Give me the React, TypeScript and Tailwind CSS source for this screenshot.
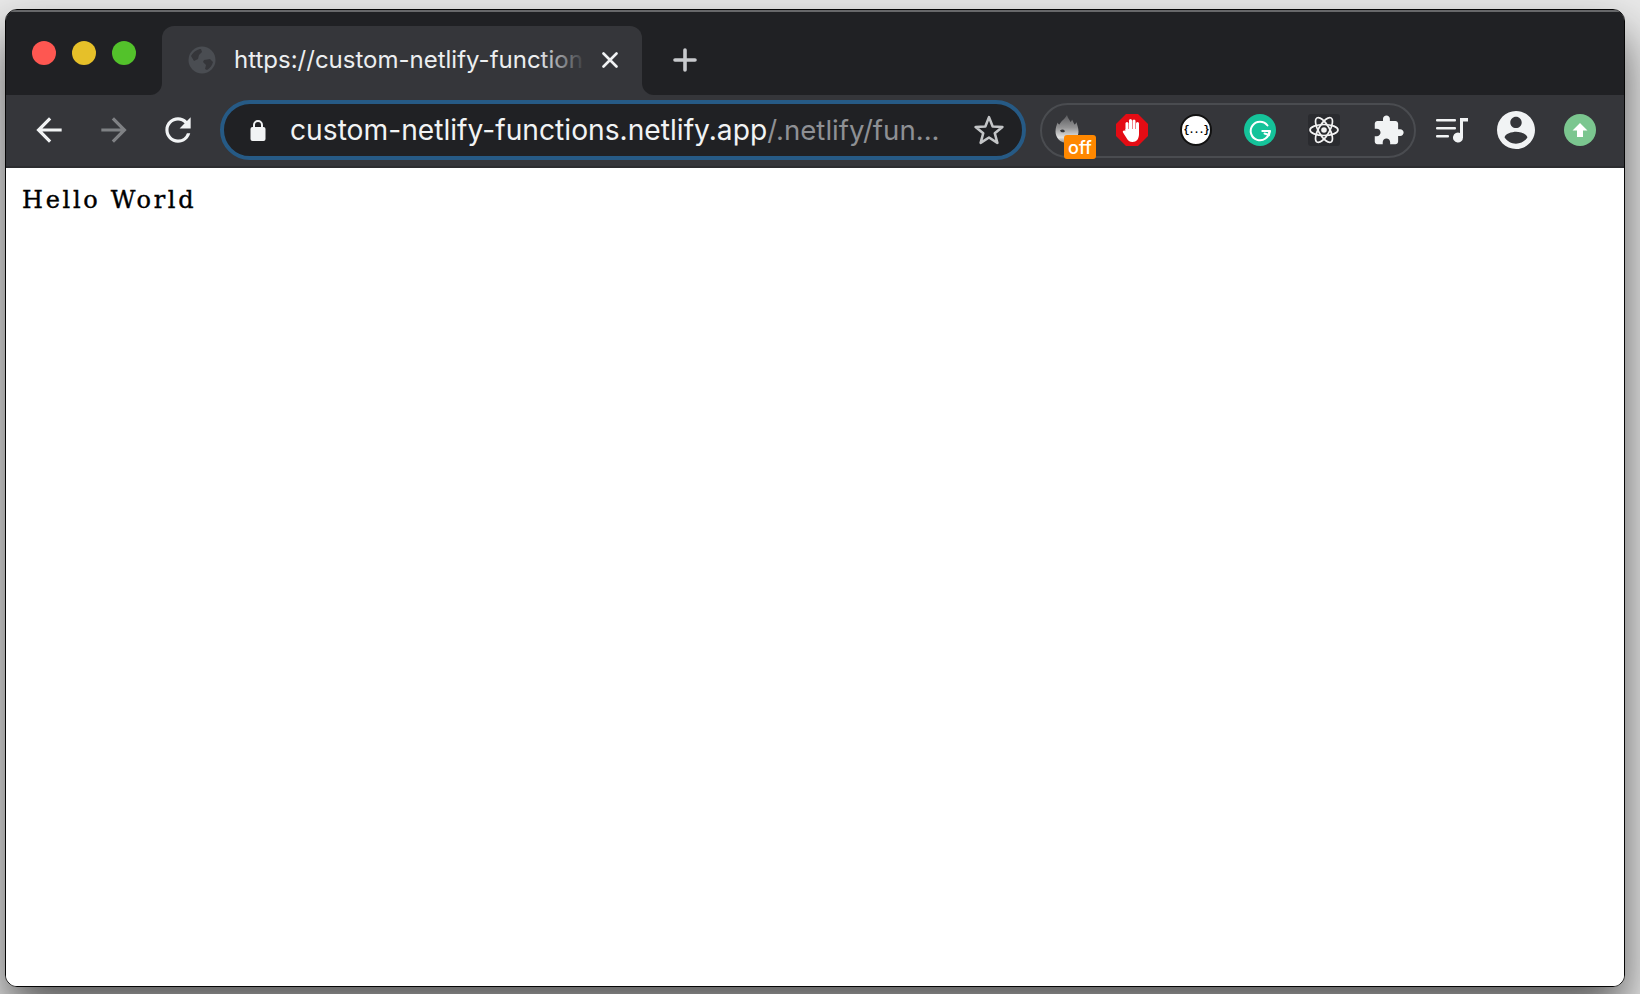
const Back = ({ className }: { className: string }) => (
  <svg viewBox="0 0 24 24" className={className} fill="currentColor">
    <path d="M20 11H7.83l5.59-5.59L12 4l-8 8 8 8 1.41-1.41L7.83 13H20z" />
  </svg>
);

const Flame = () => (
  <svg viewBox="0 0 24 28" className="w-[24px] h-[28px]">
    <defs>
      <linearGradient id="fl" x1="0" y1="0" x2="0" y2="1">
        <stop offset="0" stopColor="#5a5b5e" />
        <stop offset="0.45" stopColor="#949495" />
        <stop offset="0.8" stopColor="#e2e2e2" />
        <stop offset="1" stopColor="#8a8a8a" />
      </linearGradient>
    </defs>
    <path
      fill="url(#fl)"
      d="M12 0c.6 3 2.500 4.500 3.500 7 .8-.5 1.300-1.300 1.500-2.500 1 1.500 1.500 3.500 2.500 5 .8-.3 1.600-1.200 2-2.500.8 3.500 2 6 2 9.500 0 6-4.500 11.500-11.500 11.500S.5 22.500.5 16.500c0-3.500 1-6 2-9 .4 1 1.200 1.700 2 2C5.500 6.500 9.500 4.500 12 0z"
    />
    <path fill="#35363a" d="M5 15.500c2-1.500 4-1 5 .7-1.500 1.800-4 1.500-5-.7z" />
  </svg>
);

const StopHand = () => (
  <svg viewBox="0 0 32 32" className="w-8 h-8">
    <polygon fill="#e40c14" points="10,0 22,0 32,10 32,22 22,32 10,32 0,22 0,10" />
    <g fill="#fff">
      <rect x="9.500" y="8" width="3" height="13" rx="1.500" />
      <rect x="13" y="5" width="3" height="15" rx="1.500" />
      <rect x="16.500" y="5.500" width="3" height="15" rx="1.500" />
      <rect x="20" y="8" width="3" height="13" rx="1.500" />
      <path d="M9.500 15h13.500v5c0 5-2.500 8-6.500 8-3 0-4.500-1.500-6-4l-3.500-5.500c-.8-1.500 1-2.700 2.200-1.500l.3.300z" />
    </g>
  </svg>
);

const Grammarly = () => (
  <svg viewBox="0 0 32 32" className="w-8 h-8">
    <circle cx="16" cy="16" r="16" fill="#15c39a" />
    <path
      d="M23.500 11.500A9.300 9.300 0 1 0 25.300 17h-7"
      fill="none"
      stroke="#fff"
      strokeWidth="2"
      strokeLinecap="round"
      strokeLinejoin="round"
    />
    <path d="M20.500 19.500 25 21l1-4" fill="none" stroke="#fff" strokeWidth="2" strokeLinecap="round" />
  </svg>
);

const Atom = () => (
  <div className="w-8 h-8 rounded-[3px] bg-[#2a2b2f] flex items-center justify-center">
    <svg viewBox="0 0 32 32" className="w-8 h-8" fill="none" stroke="#f2f2f2" strokeWidth="1.700">
      <ellipse cx="16" cy="16" rx="14" ry="5.500" />
      <ellipse cx="16" cy="16" rx="14" ry="5.500" transform="rotate(60 16 16)" />
      <ellipse cx="16" cy="16" rx="14" ry="5.500" transform="rotate(120 16 16)" />
      <circle cx="16" cy="16" r="2.800" fill="#f2f2f2" stroke="none" />
    </svg>
  </div>
);

export default function App() {
  return (
    <div className="w-[1640px] h-[994px] overflow-hidden bg-[#e9e9e9] pt-[9px] pl-[5px]">
      <div className="w-[1620px] h-[978px] rounded-[12px] border border-[#050505] bg-white shadow-[0_26px_48px_rgba(0,0,0,0.62)] overflow-hidden flex flex-col">
        {/* Title bar */}
        <div className="h-[85px] shrink-0 flex bg-[#35363a] border-t-2 border-[#67686a]">
          <div className="w-[156px] shrink-0 bg-[#202124] rounded-br-[12px] flex items-center gap-[16px] pl-[26px] pb-[2px]">
            <span className="w-6 h-6 rounded-full bg-[#fe5751]" />
            <span className="w-6 h-6 rounded-full bg-[#e6c029]" />
            <span className="w-6 h-6 rounded-full bg-[#53c22b]" />
          </div>
          <div className="w-[480px] shrink-0 bg-[#202124] pt-[14px] flex">
            <div className="flex-1 min-w-0 bg-[#35363a] rounded-t-[12px] flex items-center pl-[26px] pr-[24px] pb-[1px]">
              <svg viewBox="0 0 28 28" className="w-[28px] h-[28px] shrink-0">
                <circle cx="14" cy="14" r="13.500" fill="#4a4d52" />
                <path
                  fill="#35363a"
                  d="M3 10c3-5 7-7 10-7l1 3-3 3-1 4-4 2-3-5zM16 14l6-1 3 3c-1 4-3 6-6 8l-2-1 1-4-3-3z"
                />
              </svg>
              <div className="relative ml-[18px] flex-1 min-w-0 whitespace-nowrap font-['Inter',sans-serif] text-[24px] leading-[32px] text-[#eceef0]">
                https://custom-netlify-function
                <span className="absolute right-0 inset-y-0 w-[48px] bg-gradient-to-r from-transparent to-[#35363a]" />
              </div>
              <svg viewBox="0 0 16 16" className="ml-[16px] w-4 h-4 shrink-0" stroke="#f1f3f4" strokeWidth="2.600" strokeLinecap="round">
                <path d="M1.500 1.500l13 13M14.500 1.500l-13 13" />
              </svg>
            </div>
          </div>
          <div className="flex-1 bg-[#202124] rounded-bl-[12px] pl-[31px] flex items-center pt-[12px]">
            <svg viewBox="0 0 24 24" className="w-6 h-6" stroke="#c8cacd" strokeWidth="3.600" strokeLinecap="round">
              <path d="M2 12h20M12 2v20" />
            </svg>
          </div>
        </div>

        {/* Toolbar */}
        <div className="h-[73px] shrink-0 bg-[#35363a] border-b-2 border-[#2c2d30] flex items-center pb-[1px]">
          <div className="w-[214px] shrink-0 flex items-center pl-[24px] gap-[26.5px]">
            <Back className="w-[38px] h-[38px] text-[#f1f3f4]" />
            <Back className="w-[38px] h-[38px] text-[#7f8184] rotate-180" />
            <svg viewBox="0 0 24 24" className="w-[38px] h-[38px] text-[#f1f3f4]" fill="currentColor">
              <path d="M17.650 6.350A7.960 7.960 0 0 0 12 4c-4.420 0-7.990 3.580-7.990 8s3.570 8 7.990 8c3.730 0 6.840-2.550 7.730-6h-2.080A5.990 5.990 0 0 1 12 18c-3.310 0-6-2.690-6-6s2.690-6 6-6c1.660 0 3.140.690 4.220 1.780L13 11h7V4l-2.350 2.350z" />
            </svg>
          </div>

          {/* Omnibox */}
          <div className="w-[806px] h-[60px] shrink-0 rounded-full border-[4px] border-[#265a85] bg-[#202124] flex items-center pl-[26px] pr-[18px]">
            <svg viewBox="0 0 16 22" className="w-[16px] h-[22px] shrink-0 mb-[1px]">
              <rect x="0.500" y="8" width="15" height="14" rx="2" fill="#f1f3f4" />
              <path d="M4 9V6a4 4 0 0 1 8 0v3" fill="none" stroke="#f1f3f4" strokeWidth="2" />
            </svg>
            <div className="ml-[24px] flex-1 whitespace-nowrap font-['Inter',sans-serif] text-[28.2px] leading-[36px] text-[#f1f3f4]">
              custom-netlify-functions.netlify.app
              <span className="text-[#8e9094] text-[27.6px]">/.netlify/fun...</span>
            </div>
            <svg viewBox="0 0 28 28" className="w-[30px] h-[30px] shrink-0" fill="none" stroke="#c3c5c7" strokeWidth="2.400" strokeLinejoin="round">
              <polygon points="14,2 17.400,10.700 26.500,11.200 19.400,17 21.800,26 14,21 6.200,26 8.600,17 1.500,11.200 10.600,10.700" />
            </svg>
          </div>

          {/* Extensions */}
          <div className="ml-[14px] w-[376px] h-[55px] shrink-0 rounded-full border-2 border-[#4a4c50] flex items-center">
            <div className="relative w-[58px] h-full flex items-center pl-[13px] shrink-0 pb-[3px]">
              <Flame />
              <span className="absolute left-[22px] top-[30px] w-[32px] h-[24px] rounded-[3px] bg-[#ff8800] text-white font-['Inter',sans-serif] font-medium text-[18px] leading-[25px] text-center">
                off
              </span>
            </div>
            <div className="w-[64px] flex justify-center shrink-0"><StopHand /></div>
            <div className="w-[64px] flex justify-center shrink-0">
              <div className="w-[32px] h-[32px] rounded-full bg-white border-2 border-[#111] flex items-center justify-center font-['Liberation_Mono',monospace] text-[10px] tracking-[-1px] font-bold text-black">
                {"{...}"}
              </div>
            </div>
            <div className="w-[64px] flex justify-center shrink-0"><Grammarly /></div>
            <div className="w-[64px] flex justify-center shrink-0"><Atom /></div>
            <div className="w-[64px] flex justify-center shrink-0">
              <svg viewBox="0 0 24 24" className="w-[33px] h-[33px] text-[#f1f3f4]" fill="currentColor">
                <path d="M20.500 11H19V7c0-1.100-.9-2-2-2h-4V3.500C13 2.120 11.880 1 10.500 1S8 2.120 8 3.500V5H4c-1.100 0-1.990.9-1.990 2v3.800H3.500c1.490 0 2.700 1.210 2.700 2.700s-1.210 2.700-2.700 2.700H2V20c0 1.100.9 2 2 2h3.800v-1.500c0-1.490 1.210-2.700 2.700-2.700 1.490 0 2.700 1.210 2.700 2.700V22H17c1.100 0 2-.9 2-2v-4h1.500c1.380 0 2.500-1.120 2.500-2.500S21.880 11 20.500 11z" />
              </svg>
            </div>
          </div>

          {/* Right icons */}
          <div className="ml-[19px] w-[34px] flex justify-center shrink-0">
            <svg viewBox="0 0 32 26" className="w-[32px] h-[26px]" fill="#f1f3f4">
              <rect x="0" y="2" width="20" height="2.600" rx="1" />
              <rect x="0" y="10" width="20" height="2.600" rx="1" />
              <rect x="0" y="18" width="13" height="2.600" rx="1" />
              <path d="M24 1h8v3.500h-5v16a5 5 0 1 1-3-4.500z" />
            </svg>
          </div>
          <div className="ml-[24px] w-[46px] flex justify-center shrink-0">
            <svg viewBox="2 2 20 20" className="w-[38px] h-[38px] text-[#f1f3f4]" fill="currentColor">
              <path d="M12 2C6.480 2 2 6.480 2 12s4.480 10 10 10 10-4.480 10-10S17.520 2 12 2zm0 3c1.660 0 3 1.340 3 3s-1.340 3-3 3-3-1.340-3-3 1.340-3 3-3zm0 14.200c-2.500 0-4.710-1.280-6-3.220.03-1.990 4-3.080 6-3.080 1.990 0 5.970 1.090 6 3.080-1.290 1.940-3.500 3.220-6 3.220z" />
            </svg>
          </div>
          <div className="ml-[25px] w-8 h-8 rounded-full bg-[#7bc68f] flex items-center justify-center shrink-0">
            <svg viewBox="0 0 16 16" className="w-[16px] h-[16px]" fill="#fff">
              <path d="M8 1l7.500 7.500H11V15H5V8.500H.5z" />
            </svg>
          </div>
        </div>

        {/* Page */}
        <div className="flex-1 bg-white pl-[16px] pt-[17px] font-['DejaVu_Serif',serif] text-[24px] tracking-[2.7px] [-webkit-text-stroke:0.4px_black] leading-[30px] text-black">
          Hello World
        </div>
      </div>
    </div>
  );
}
